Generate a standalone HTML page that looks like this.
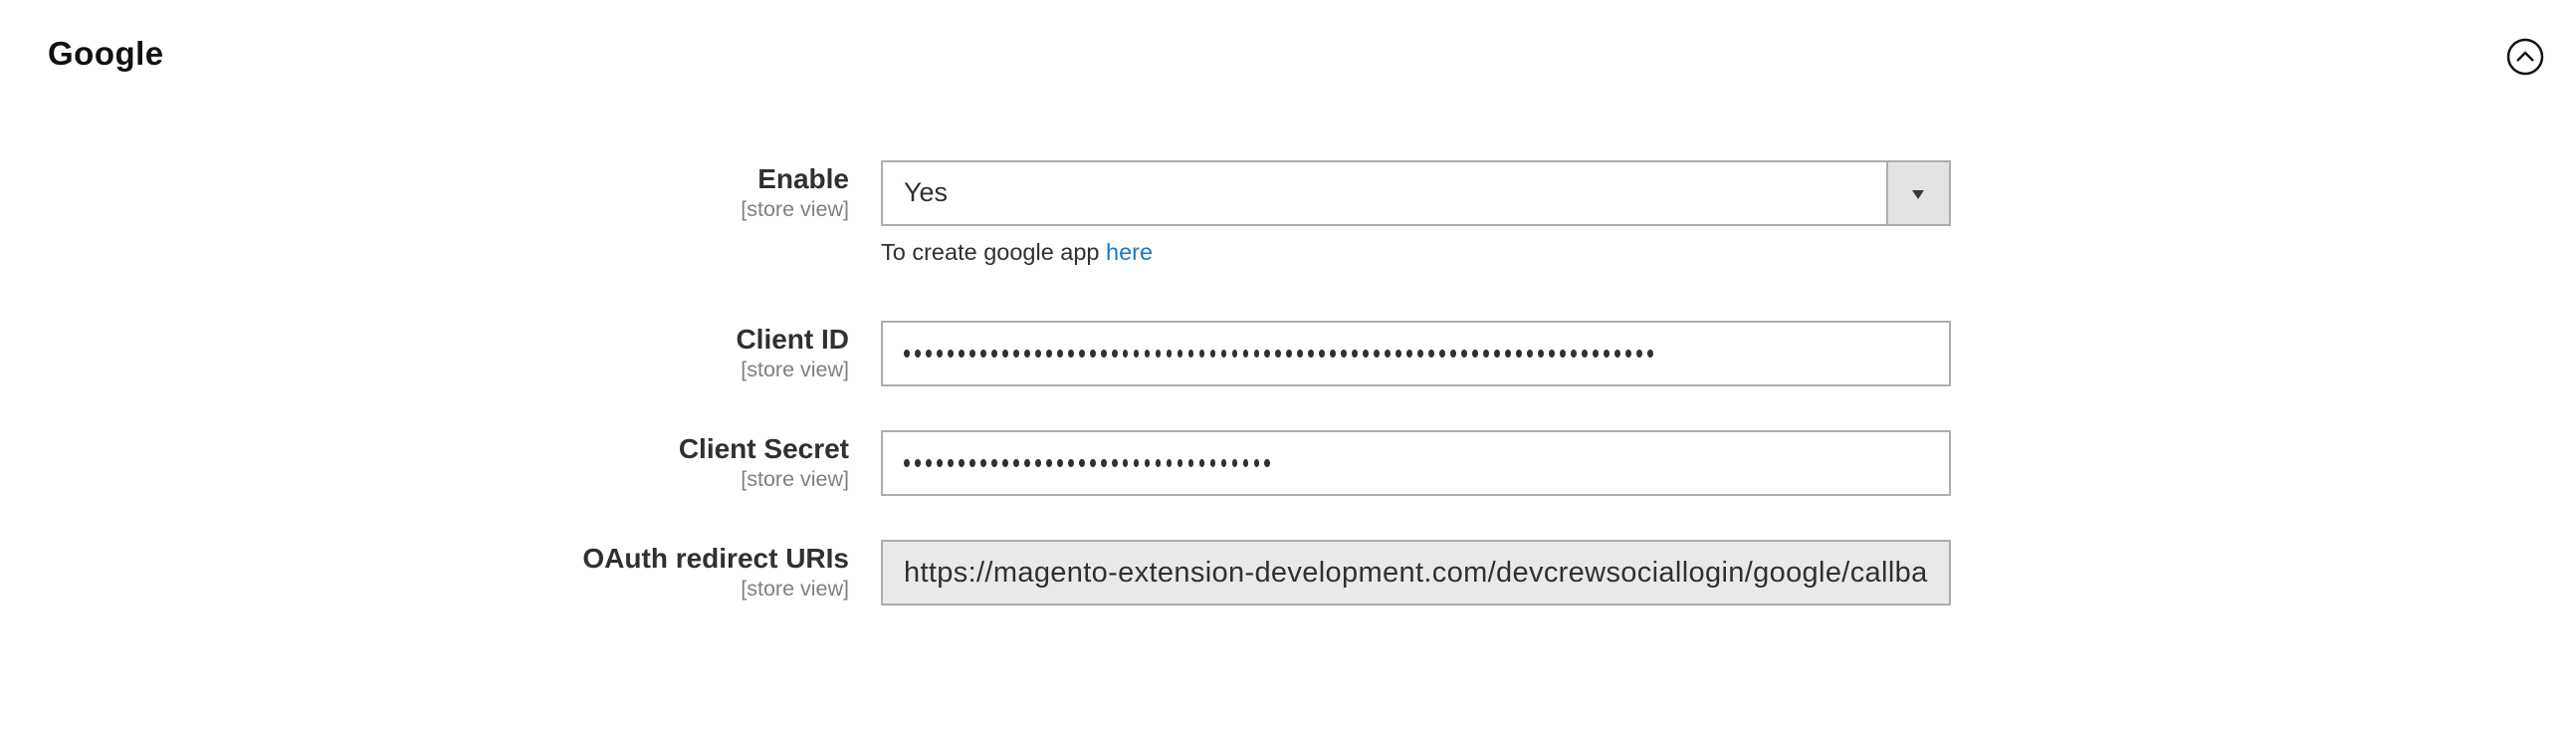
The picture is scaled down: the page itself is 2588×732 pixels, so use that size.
<!DOCTYPE html>
<html><head><meta charset="utf-8"><style>
body{margin:0;width:2588px;height:732px;background:#fff;position:relative;overflow:hidden;font-family:"Liberation Sans",sans-serif;color:#303030}
.a{position:absolute;white-space:nowrap}
.lbl{position:absolute;right:1735px;text-align:right;font-weight:bold;font-size:28px;color:#303030;line-height:1}
.sv{position:absolute;right:1735px;font-size:21.5px;color:#808080;line-height:1}
.box{position:absolute;left:885px;width:1071px;height:62px;border:2px solid #adadad;background:#fff;box-sizing:content-box}
.dots{position:absolute;left:21px;top:27px;display:flex;gap:5.2px}
.dots i{display:block;width:5.8px;height:8px;border-radius:50%;background:#303030}
</style></head><body>
<div class="a" style="left:48px;top:35px;font-size:33px;font-weight:bold;color:#111;letter-spacing:0.5px">Google</div>
<svg class="a" style="left:2518px;top:38px" width="38" height="38" viewBox="0 0 38 38"><circle cx="19" cy="19" r="17" fill="none" stroke="#111" stroke-width="2.5"/><path d="M11 23 L19 15 L27 23" fill="none" stroke="#111" stroke-width="2.5"/></svg>

<div class="lbl" style="top:166px">Enable</div>
<div class="sv" style="top:200px">[store view]</div>
<div class="box" style="top:161px;overflow:hidden">
  <div class="a" style="left:21px;top:15px;font-size:27px;color:#303030">Yes</div>
  <div class="a" style="left:1008px;top:0;width:63px;height:62px;box-sizing:border-box;background:#e3e3e3;border-left:2px solid #adadad"></div>
  <div class="a" style="left:1034px;top:28px;width:0;height:0;border-left:6px solid transparent;border-right:6px solid transparent;border-top:9px solid #41362f"></div>
</div>
<div class="a" style="left:885px;top:240px;font-size:23.5px;color:#303030">To create google app <span style="color:#1979c3">here</span></div>

<div class="lbl" style="top:327px">Client ID</div>
<div class="sv" style="top:361px">[store view]</div>
<div class="box" style="top:322px"><div class="dots" id="d1"></div></div>

<div class="lbl" style="top:437px">Client Secret</div>
<div class="sv" style="top:471px">[store view]</div>
<div class="box" style="top:432px"><div class="dots" id="d2"></div></div>

<div class="lbl" style="top:547px">OAuth redirect URIs</div>
<div class="sv" style="top:581px">[store view]</div>
<div class="box" style="top:542px;background:#e9e9e9;overflow:hidden">
  <div class="a" style="left:21px;top:15px;font-size:29px;letter-spacing:0.35px;color:#303030">https://magento-extension-development.com/devcrewsociallogin/google/callba</div>
</div>
<script>
function f(id,n){var d=document.getElementById(id);for(var i=0;i<n;i++)d.appendChild(document.createElement('i'));}
f('d1',69);f('d2',34);
</script>
</body></html>
